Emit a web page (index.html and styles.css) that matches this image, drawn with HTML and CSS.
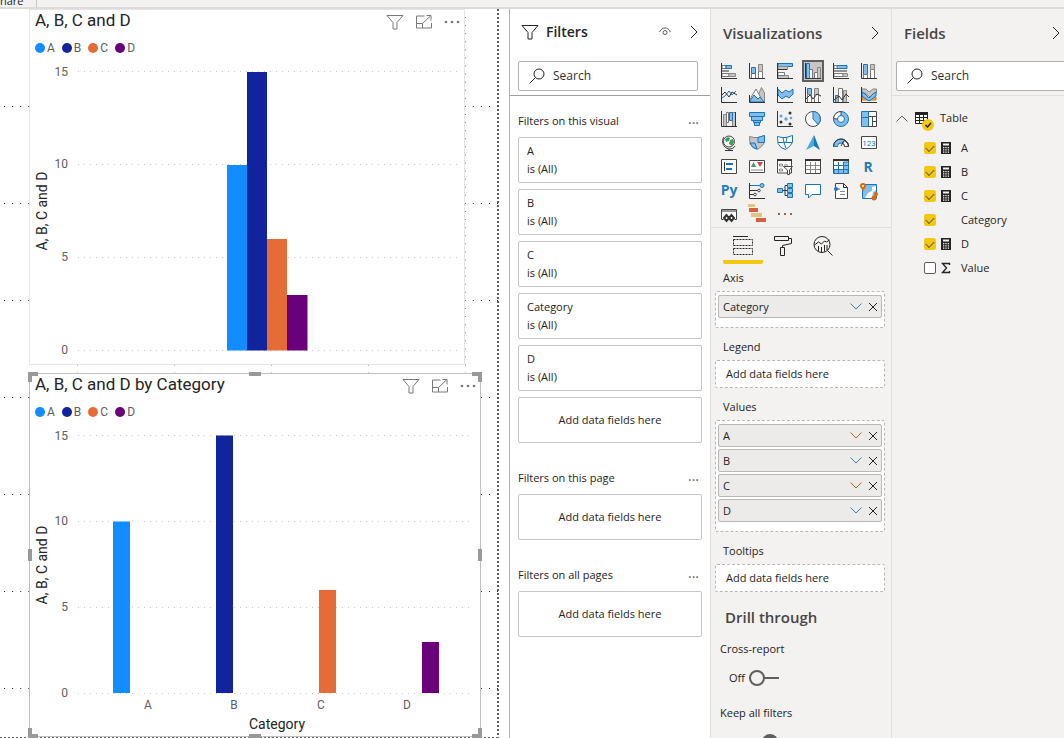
FILE: index.html
```html
<!DOCTYPE html>
<html lang="en">

<head>
    <meta charset="utf-8">
    <meta name="viewport" content="width=device-width,initial-scale=1.0">
    <title>Report editor</title>
    <link rel="stylesheet" href="styles.css">
</head>

<body>
    <!-- shared icons -->
    <svg class="defs" width="0" height="0">
        <symbol id="i-filter" viewBox="0 0 18 16">
            <path d="M1 1.500h16l-6 7V15H7V8.500z" fill="none" stroke="currentColor" />
        </symbol>
        <symbol id="i-focus" viewBox="0 0 16 14">
            <path d="M8.500 1H.5v12h15V8M.5 8.500h6V13M6.500 8.500L14.500 1M10.500.5H15v5" fill="none" stroke="currentColor" />
        </symbol>
        <symbol id="i-search" viewBox="0 0 16 16">
            <circle cx="10" cy="6" r="5" fill="none" stroke="currentColor" />
            <path d="M6.500 9.500L.5 15.500" stroke="currentColor" />
        </symbol>
        <symbol id="i-right" viewBox="0 0 8 14">
            <path d="M1 1l6 6-6 6" fill="none" stroke="currentColor" />
        </symbol>
        <symbol id="i-down" viewBox="0 0 12 7">
            <path d="M.5.5L6 6 11.500.5" fill="none" stroke="currentColor" />
        </symbol>
        <symbol id="i-x" viewBox="0 0 10 10">
            <path d="M1 1l8 8M9 1L1 9" stroke="currentColor" />
        </symbol>
        <symbol id="i-calc" viewBox="0 0 10 12">
            <path d="M0 0h10v12H0z" fill="#252423" />
            <path d="M2 1.500h6v2H2zM2 5h1.300v1.300H2zM4.300 5h1.300v1.300H4.300zM6.700 5H8v1.300H6.700zM2 7.200h1.300v1.300H2zM4.300 7.200h1.300v1.300H4.300zM6.700 7.200H8v1.300H6.700zM2 9.400h1.300v1.300H2zM4.300 9.400h1.300v1.300H4.300zM6.700 9.400H8v1.300H6.700z" fill="#f3f2f1" />
        </symbol>
    </svg>

    <header class="ribbon"><span class="ribbon-item">hare</span></header>

    <div class="workspace">
        <main class="canvas">
            <svg class="snap-grid" width="100%" height="100%">
                <g class="snap-h">
                    <line x1="4" x2="100%" y1="97.500" y2="97.500" />
                    <line x1="4" x2="100%" y1="194.500" y2="194.500" />
                    <line x1="4" x2="100%" y1="291.500" y2="291.500" />
                    <line x1="4" x2="100%" y1="388.500" y2="388.500" />
                    <line x1="4" x2="100%" y1="485.500" y2="485.500" />
                    <line x1="4" x2="100%" y1="582.500" y2="582.500" />
                    <line x1="4" x2="100%" y1="679.500" y2="679.500" />
                </g>
                <g class="snap-v">
                    <line x1="77.500" x2="77.500" y1="8" y2="100%" />
                    <line x1="174.500" x2="174.500" y1="8" y2="100%" />
                    <line x1="271.500" x2="271.500" y1="8" y2="100%" />
                    <line x1="368.500" x2="368.500" y1="8" y2="100%" />
                    <line x1="465.500" x2="465.500" y1="8" y2="100%" />
                </g>
            </svg>

            <section class="visual visual-total">
                <div class="visual-head">
                    <h2>A, B, C and D</h2>
                    <div class="visual-tools">
                        <button aria-label="Filters"><svg width="18" height="16"><use href="#i-filter" /></svg></button>
                        <button aria-label="Focus mode"><svg width="16" height="14"><use href="#i-focus" /></svg></button>
                        <button aria-label="More options"><svg width="16" height="4" fill="currentColor"><circle cx="2" cy="2" r="1.300" /><circle cx="8" cy="2" r="1.300" /><circle cx="14" cy="2" r="1.300" /></svg></button>
                    </div>
                </div>
                <ul class="legend">
                    <li class="a">A</li>
                    <li class="b">B</li>
                    <li class="c">C</li>
                    <li class="d">D</li>
                </ul>
                <svg class="plot" viewBox="0 0 434 305">
                    <g class="grid">
                        <path d="M48 12.500h379M48 105.500h379M48 198.500h379M48 291.500h379" />
                    </g>
                    <g class="ticks">
                        <text x="38" y="17">15</text>
                        <text x="38" y="109">10</text>
                        <text x="38" y="202">5</text>
                        <text x="38" y="295">0</text>
                    </g>
                    <text class="axis-title" transform="translate(17 152) rotate(-90)">A, B, C and D</text>
                    <rect class="a" x="197" y="106" width="20" height="185.500" />
                    <rect class="b" x="217" y="13" width="20" height="278.500" />
                    <rect class="c" x="237" y="180" width="20" height="111.500" />
                    <rect class="d" x="257" y="236" width="20.500" height="55.500" />
                </svg>
            </section>

            <section class="visual visual-category selected">
                <div class="visual-head">
                    <h2>A, B, C and D by Category</h2>
                    <div class="visual-tools">
                        <button aria-label="Filters"><svg width="18" height="16"><use href="#i-filter" /></svg></button>
                        <button aria-label="Focus mode"><svg width="16" height="14"><use href="#i-focus" /></svg></button>
                        <button aria-label="More options"><svg width="16" height="4" fill="currentColor"><circle cx="2" cy="2" r="1.300" /><circle cx="8" cy="2" r="1.300" /><circle cx="14" cy="2" r="1.300" /></svg></button>
                    </div>
                </div>
                <ul class="legend">
                    <li class="a">A</li>
                    <li class="b">B</li>
                    <li class="c">C</li>
                    <li class="d">D</li>
                </ul>
                <svg class="plot" viewBox="0 0 450 313">
                    <g class="grid">
                        <path d="M48 12.500h396M48 98.500h396M48 184.500h396M48 270.500h396" />
                    </g>
                    <g class="ticks">
                        <text x="38" y="17">15</text>
                        <text x="38" y="102">10</text>
                        <text x="38" y="188">5</text>
                        <text x="38" y="274">0</text>
                    </g>
                    <text class="axis-title" transform="translate(17 142) rotate(-90)">A, B, C and D</text>
                    <rect class="a" x="83" y="98.500" width="17" height="171.500" />
                    <rect class="b" x="186" y="12.500" width="17" height="257.500" />
                    <rect class="c" x="289" y="167" width="17" height="103" />
                    <rect class="d" x="392" y="219" width="17" height="51" />
                    <g class="categories">
                        <text x="118" y="286">A</text>
                        <text x="204" y="286">B</text>
                        <text x="291" y="286">C</text>
                        <text x="377" y="286">D</text>
                    </g>
                    <text class="axis-title" x="247" y="306">Category</text>
                </svg>
                <i class="handle tl"></i><i class="handle tc"></i><i class="handle tr"></i>
                <i class="handle ml"></i><i class="handle mr"></i>
                <i class="handle bl"></i><i class="handle bc"></i><i class="handle br"></i>
            </section>
        </main>

        <aside class="pane filters">
            <div class="pane-head">
                <svg width="18" height="16"><use href="#i-filter" /></svg>
                <h1>Filters</h1>
                <button class="eye" aria-label="Show filter pane">
                    <svg width="12" height="9" fill="none" stroke="currentColor"><path d="M.5 5C2 2 4 1 6 1s4 1 5.500 4" /><circle cx="6" cy="5.500" r="2" /></svg>
                </button>
                <button aria-label="Collapse filters"><svg width="8" height="14"><use href="#i-right" /></svg></button>
            </div>
            <label class="search">
                <svg width="16" height="16"><use href="#i-search" /></svg>
                <input type="text" placeholder="Search" aria-label="Search filters">
            </label>
            <div class="filter-groups">
                <section>
                    <div class="group-head"><h3>Filters on this visual</h3><button aria-label="More">...</button></div>
                    <div class="card"><span>A</span><span>is (All)</span></div>
                    <div class="card"><span>B</span><span>is (All)</span></div>
                    <div class="card"><span>C</span><span>is (All)</span></div>
                    <div class="card"><span>Category</span><span>is (All)</span></div>
                    <div class="card"><span>D</span><span>is (All)</span></div>
                    <div class="card drop">Add data fields here</div>
                </section>
                <section>
                    <div class="group-head"><h3>Filters on this page</h3><button aria-label="More">...</button></div>
                    <div class="card drop">Add data fields here</div>
                </section>
                <section>
                    <div class="group-head"><h3>Filters on all pages</h3><button aria-label="More">...</button></div>
                    <div class="card drop">Add data fields here</div>
                </section>
            </div>
        </aside>

        <aside class="pane visualizations">
            <div class="pane-head">
                <h1>Visualizations</h1>
                <button aria-label="Collapse visualizations"><svg width="8" height="14"><use href="#i-right" /></svg></button>
            </div>
            <div class="gallery">
                <button aria-label="Stacked bar chart"><svg viewBox="0 0 16 16"><path class="w" d="M1 2.500h4v3H1zM1 10.500h7v3H1z" /><path class="l" d="M5 2.500h5.500v3H5z" /><path class="g" d="M8 10.500h6.500v3H8z" /><path class="k" d="M.5 0v15.500H16M1 8h7" /></svg></button>
                <button aria-label="Stacked column chart"><svg viewBox="0 0 16 16"><path class="w" d="M2.500 10.500h4v5h-4zM9.500 8.500h4v7h-4z" /><path class="l" d="M2.500 4.500h4v6h-4z" /><path class="g" d="M9.500 1.500h4v7h-4z" /><path class="k" d="M.5 0v15.500H16" /></svg></button>
                <button aria-label="Clustered bar chart"><svg viewBox="0 0 16 16"><path class="l" d="M1 .5h14.500v3H1z" /><path class="g" d="M1 3.500h9.500v3H1zM1 12.500h10.500v3H1z" /><path class="w" d="M1 9.500h6.500v3H1z" /><path class="k" d="M.5 0v15.500H16M1 6.500h9" /></svg></button>
                <button class="active" aria-label="Clustered column chart"><svg viewBox="0 0 16 16"><path class="l" d="M1.500.5h3v15h-3z" /><path class="w" d="M4.500 6.500h3v9h-3zM9.500 9.500h3v6h-3z" /><path class="g" d="M12.500 4.500h3v11h-3z" /><path class="k" d="M.5 0v15.500H16" /></svg></button>
                <button aria-label="100% stacked bar chart"><svg viewBox="0 0 16 16"><path class="l" d="M3 2.500h11v3H3z" /><path class="w" d="M1 2.500h3v3H1zM1 10.500h9v3H1z" /><path class="g" d="M10 10.500h4.500v3H10z" /><path class="k" d="M.5 0v15.500H16M1 8h13" /></svg></button>
                <button aria-label="100% stacked column chart"><svg viewBox="0 0 16 16"><path class="l" d="M2.500 1.500h4v10h-4z" /><path class="w" d="M2.500 11.500h4v4h-4zM9.500 6.500h4v9h-4z" /><path class="g" d="M9.500 1.500h4v5h-4z" /><path class="k" d="M.5 0v15.500H16" /></svg></button>

                <button aria-label="Line chart"><svg viewBox="0 0 16 16"><path class="bl" d="M1 11l3-2 4-5 3 4 4-4" /><path class="k" d="M1 8l3-3 4 5 3-5 5 3M.5 0v15.500H16" /></svg></button>
                <button aria-label="Area chart"><svg viewBox="0 0 16 16"><path class="g" d="M6 15L12.500.5 15.500 6v9z" /><path class="w" d="M1 12L7 2l5 9-2 4H1z" /><path class="l" d="M1 14l4-6 4 4 2-2 4 5H1z" /><path class="k" d="M.5 8v7.500H16" /></svg></button>
                <button aria-label="Stacked area chart"><svg viewBox="0 0 16 16"><path class="l" d="M1 2l4 4 4-3 3 2 4-3v5l-4 4-3-2-4 3-4-4z" /><path class="k" d="M.5 0v15.500H16" /></svg></button>
                <button aria-label="Line and stacked column chart"><svg viewBox="0 0 16 16"><path class="l" d="M2.500 1.500h4v6h-4z" /><path class="w" d="M2.500 7.500h4v8h-4zM9.500 7.500h4v8h-4z" /><path class="g" d="M9.500 1.500h4v6h-4z" /><path class="k" d="M.5 0v15.500H16M1 12l4-4 3 4 4-5 4 2" /></svg></button>
                <button aria-label="Line and clustered column chart"><svg viewBox="0 0 16 16"><path class="l" d="M2.500 8.500h3v7h-3z" /><path class="w" d="M5.500 1.500h4v14h-4z" /><path class="g" d="M10.500 3.500h3v12h-3z" /><path class="k" d="M.5 0v15.500H16M1 13l5-4 3 4 4-6 3 3" /></svg></button>
                <button aria-label="Ribbon chart"><svg viewBox="0 0 16 16"><path d="M1 10h3l4 3 4-3h3v3H1z" fill="#f2a34a" stroke="#d8790f" /><path class="g" d="M1 2h4l3 3 4-3h3.500v4H13l-4 4-5-4H1z" /><path class="l" d="M1 5l3 2 4 4 4-4 3-2v4l-4 3-3 2-3-2-4-3z" /><path class="k" d="M.5 0v15.500H16" /></svg></button>

                <button aria-label="Waterfall chart"><svg viewBox="0 0 16 16"><path class="g" d="M2.500 3.500h3v12h-3zM11.500 1.500h3v14h-3z" /><path class="w" d="M5.500 1.500h2v10h-2z" /><path class="l" d="M8.500 1.500h3v8h-3z" /><path class="k" d="M.5 0v15.500H16M14.500 1v14" /></svg></button>
                <button aria-label="Funnel"><svg viewBox="0 0 16 16"><path class="l" d="M.5 1.500h15v4H.5zM2.500 5.500h11v4h-11zM4.500 9.500h7v2h-7zM5.500 11.500h5v3h-5z" /></svg></button>
                <button aria-label="Scatter chart"><svg viewBox="0 0 16 16"><g fill="#333"><circle cx="13" cy="2" r="1.500" /><circle cx="4" cy="11" r="1.500" /><circle cx="13" cy="13" r="1.500" /></g><g fill="#5ba3d9"><circle cx="4" cy="5" r="1.500" /><circle cx="9" cy="8" r="1.700" /><circle cx="14" cy="7" r="1.300" /></g><path class="k" d="M.5 0v15.500H16" /></svg></button>
                <button aria-label="Pie chart"><svg viewBox="0 0 16 16"><circle class="wk" cx="8" cy="8" r="7.500" /><path class="l" d="M8 8V.5a7.500 7.500 0 0 1 5 13z" /></svg></button>
                <button aria-label="Donut chart"><svg viewBox="0 0 16 16"><circle class="l" cx="8" cy="8" r="7.500" /><path class="wk" d="M8 .5a7.500 7.500 0 0 0-7.500 7L4 8l4-4z" /><circle cx="8" cy="8" r="3.500" fill="#f3f2f1" stroke="#1b74b8" /></svg></button>
                <button aria-label="Treemap"><svg viewBox="0 0 16 16"><path class="wk" d="M7.500.5h8v15h-8zM7.500 5.500h8M11.500 5.500v10M11.500 10.500h4" /><path class="l" d="M.5.5h7v6h-7zM.5 6.500h7v9h-7z" /></svg></button>

                <button aria-label="Map"><svg viewBox="0 0 16 16"><circle class="wk" cx="8" cy="6.500" r="5.500" /><path d="M4 4l3-2 2 1-1 3-3 1zM9 5l3-1 1 3-2 4-3-2z" fill="#3c9d5c" /><path class="k" d="M3 2C0 6 2 13 8 14c3 0 5-1 6-3M8 14v1.500M4 15.500h8" /></svg></button>
                <button aria-label="Filled map"><svg viewBox="0 0 16 16"><path class="g" d="M.5 1.500L5 2.500h4l6.500-2v7l-3 4-4 3L4 12.500l-3-4z" /><path class="l" d="M9 2.500l6.500-2v7H9zM1 8h5l2 6-4-1.500z" /></svg></button>
                <button aria-label="Shape map"><svg viewBox="0 0 16 16"><path class="wb" d="M.5 1.500L5 2.500h4l6.500-2v7l-3 4-4 3L4 12.500l-3-4zM1 7.500h14M6 2.500l1 5 2 6M10 2.500l-1 5" /></svg></button>
                <button aria-label="Azure map"><svg viewBox="0 0 16 16"><path d="M9 0l6 15-6-4z" fill="#1777b7" /><path d="M9 0L1 15l8-4z" fill="#47addd" /></svg></button>
                <button aria-label="Gauge"><svg viewBox="0 0 16 16"><path class="l" d="M.5 11.500a7.500 7.500 0 0 1 15 0h-4a3.500 3.500 0 0 0-7 0z" /><path class="wk" d="M11 5.500c3 1.500 4.500 3.500 4.500 6h-4c0-2-.5-2.500-2-3.500z" /><path class="k" d="M.5 11.500a7.500 7.500 0 0 1 15 0M8 11l3-5" /></svg></button>
                <button aria-label="Card"><svg viewBox="0 0 16 16"><path class="wk" d="M.5 1.500h15v12H.5z" /><text class="num" x="8" y="11">123</text></svg></button>

                <button aria-label="Multi-row card"><svg viewBox="0 0 16 16"><path class="wk" d="M.5.500h15v14H.5z" /><path class="k" d="M3.500 3v9" /><path class="bl2" d="M5 5h7M5 10h6" /></svg></button>
                <button aria-label="KPI"><svg viewBox="0 0 16 16"><path class="wk" d="M.5 1.500h15v12H.5z" /><path d="M2 8l2.500-5L7 8z" fill="#3c9d5c" /><path d="M8 3h6l-3 5z" fill="#d64550" /><path class="gl" d="M2 11h12" /></svg></button>
                <button aria-label="Slicer"><svg viewBox="0 0 16 16"><path class="wk" d="M.5 1h14v13H.5z" /><path class="k2" d="M0 1h15" /><path class="gl" d="M2.500 5h3v2h-3zM2.500 10h3v2h-3zM7 6h4" /><path class="wk" d="M6.500 7.500h9L12.500 11v4.500h-2V11z" /></svg></button>
                <button aria-label="Table"><svg viewBox="0 0 16 16"><path class="wk" d="M.5.500h15v14H.5z" /><path class="gl" d="M1 6.500h14M1 10.500h14M5.500 3v11M10.500 3v11" /><path class="k2" d="M0 1h16" /></svg></button>
                <button aria-label="Matrix"><svg viewBox="0 0 16 16"><path class="wk" d="M.5.500h15v14H.5z" /><path class="l" d="M10.500 3h5v11.500h-5zM1 10.500h14v4H1z" /><path class="bl" d="M5.500 3v11M1 6.500h14M10.500 3v11" /><path class="k2" d="M0 1h16" /></svg></button>
                <button aria-label="R script visual"><svg viewBox="0 0 16 16"><text class="script" x="7" y="13">R</text></svg></button>

                <button aria-label="Python visual"><svg viewBox="0 0 16 16"><text class="script" x="8" y="12">Py</text></svg></button>
                <button aria-label="Key influencers"><svg viewBox="0 0 16 16"><path class="k" d="M.5 0v15.500H16M1 7.500h8M1 11.500h4" /><path class="bl" d="M1 2.500h10" /><circle class="l" cx="13" cy="2.500" r="2" /><circle class="wk" cx="10" cy="7.500" r="1.300" /><circle class="wk" cx="6" cy="11.500" r="1.300" /></svg></button>
                <button aria-label="Decomposition tree"><svg viewBox="0 0 16 16"><path class="k" d="M5 7.500h6M8 2.500v10M8 2.500h3M8 12.500h3" /><path class="l" d="M.5 5.500h5v4h-5zM10.500.500h5v4h-5zM10.500 5.500h5v4h-5zM10.500 10.500h5v4h-5z" /></svg></button>
                <button aria-label="Q&amp;A"><svg viewBox="0 0 16 16"><path class="wb" d="M.5 1.500h15v10H7l-3.500 3.500v-3.500h-3z" /></svg></button>
                <button aria-label="Paginated report"><svg viewBox="0 0 16 16"><path class="wk" d="M2.500.500h8l4 4v11h-12z" /><path class="k" d="M10.500.500v4h4" /><path class="gl" d="M7 8.500h5M7 11.500h5" /><circle cx="3" cy="6" r="2" fill="#1b74b8" /><path class="bl" d="M3 6h4" /></svg></button>
                <button aria-label="ArcGIS map"><svg viewBox="0 0 16 16"><path class="l" d="M1.500 1.500h14v14h-14z" /><path d="M4 15l3-5 4-2V4l4-1v4l-3 2-1 6z" fill="#fff" /><path d="M-1 3a3 3 0 0 1 6 0c0 2-2 3-3 5-1-2-3-3-3-5z" fill="#d96b0b" /><circle cx="2" cy="3" r="1" fill="#fff" /><circle cx="15" cy="11" r="2" fill="#d96b0b" /><circle cx="13" cy="15" r="2.500" fill="#d96b0b" /></svg></button>

                <button aria-label="Power Apps"><svg viewBox="0 0 16 16"><path class="wk" d="M2.500 12.500h-2v-10h15v10h-2" /><path class="k" d="M1 4h14" /><path class="k" d="M3 11l2.500-3L8 11l-2.500 3zM8 11l2.500-3 2.500 3-2.500 3z" stroke-width="2" /></svg></button>
                <button aria-label="Gantt"><svg viewBox="0 0 16 16"><path d="M-1-3h7v3h-7zM2 6h11v4H2z" fill="#e8c27c" /><path d="M0 1h9v4H0zM7 11h10v4H7z" fill="#d65f42" /></svg></button>
                <button aria-label="Get more visuals"><svg viewBox="0 0 16 16"><path d="M1 6h2v2H1zM7 6h2v2H7zM13 6h2v2h-2z" fill="#8a6a50" /></svg></button>
            </div>
            <div class="tabs">
                <button class="current" aria-label="Fields"><svg width="22" height="20" fill="none" stroke="#252423"><path d="M1 .5h15" /><path d="M1.500 3.500h19v6h-19zM1.500 12.500h19v6h-19z" stroke-dasharray="2 1" /></svg></button>
                <button aria-label="Format"><svg width="18" height="20" fill="none" stroke="#252423"><path d="M.5.500h14v4H.5zM14.500 2.500h3v5l-9 2v2M6.500 11.500h4v8h-4z" /></svg></button>
                <button aria-label="Analytics"><svg width="20" height="20" fill="none" stroke="#252423"><circle cx="9" cy="8.500" r="8" /><path d="M1.500 9l4-3 3 2 3-3 2 1 3-2M5.500 15v-5M8.500 16.500V11M11.500 15.500V9M14 14V9M14.500 14.500l5 5" /></svg></button>
            </div>
            <div class="wells">
                <h3>Axis</h3>
                <div class="well filled">
                    <div class="field"><span>Category</span><button class="blue" aria-label="Options"><svg width="12" height="7"><use href="#i-down" /></svg></button><button aria-label="Remove"><svg width="10" height="10"><use href="#i-x" /></svg></button></div>
                </div>
                <h3>Legend</h3>
                <div class="well">Add data fields here</div>
                <h3>Values</h3>
                <div class="well filled">
                    <div class="field"><span>A</span><button class="brown" aria-label="Options"><svg width="12" height="7"><use href="#i-down" /></svg></button><button aria-label="Remove"><svg width="10" height="10"><use href="#i-x" /></svg></button></div>
                    <div class="field"><span>B</span><button class="blue" aria-label="Options"><svg width="12" height="7"><use href="#i-down" /></svg></button><button aria-label="Remove"><svg width="10" height="10"><use href="#i-x" /></svg></button></div>
                    <div class="field"><span>C</span><button class="brown" aria-label="Options"><svg width="12" height="7"><use href="#i-down" /></svg></button><button aria-label="Remove"><svg width="10" height="10"><use href="#i-x" /></svg></button></div>
                    <div class="field"><span>D</span><button class="blue" aria-label="Options"><svg width="12" height="7"><use href="#i-down" /></svg></button><button aria-label="Remove"><svg width="10" height="10"><use href="#i-x" /></svg></button></div>
                </div>
                <h3>Tooltips</h3>
                <div class="well">Add data fields here</div>
            </div>
            <div class="drill">
                <h2>Drill through</h2>
                <p>Cross-report</p>
                <label class="switch">Off <input type="checkbox" role="switch"></label>
                <p>Keep all filters</p>
                <label class="switch">On <input type="checkbox" role="switch" checked></label>
            </div>
        </aside>

        <aside class="pane fields">
            <div class="pane-head">
                <h1>Fields</h1>
                <button aria-label="Collapse fields"><svg width="8" height="14"><use href="#i-right" /></svg></button>
            </div>
            <label class="search">
                <svg width="16" height="16"><use href="#i-search" /></svg>
                <input type="text" placeholder="Search" aria-label="Search fields">
            </label>
            <div class="tree">
                <button class="table-row">
                    <svg width="12" height="7" fill="none" stroke="#605e5c"><path d="M.5 6.500L6 1l5.500 5.500" /></svg>
                    <svg class="table-icon" width="16" height="12"><path d="M.5.500h12v11H.5zM4.500 3v8M8.500 3v8M1 5.500h12M1 8.500h12" fill="#fff" stroke="#252423" /><path d="M0 0h13v3H0z" fill="#252423" /><circle cx="13" cy="13" r="6" fill="#f2c811" /><path d="M10.500 13l2 2 3.500-4" fill="none" stroke="#252423" stroke-width="1.500" /></svg>
                    <span>Table</span>
                </button>
                <label><input type="checkbox" checked><svg width="10" height="12"><use href="#i-calc" /></svg><span>A</span></label>
                <label><input type="checkbox" checked><svg width="10" height="12"><use href="#i-calc" /></svg><span>B</span></label>
                <label><input type="checkbox" checked><svg width="10" height="12"><use href="#i-calc" /></svg><span>C</span></label>
                <label><input type="checkbox" checked><svg width="10" height="12"></svg><span>Category</span></label>
                <label><input type="checkbox" checked><svg width="10" height="12"><use href="#i-calc" /></svg><span>D</span></label>
                <label><input type="checkbox"><svg width="10" height="12"><path d="M8.500 3V1.500H1.500L5.500 6l-4 4.500h7V9" fill="none" stroke="#252423" stroke-width="1.400" /></svg><span>Value</span></label>
            </div>
        </aside>
    </div>
</body>

</html>
```
FILE: styles.css
```css
* {
    box-sizing: border-box;
}

body {
    margin: 0;
    height: 100vh;
    display: flex;
    flex-direction: column;
    overflow: hidden;
    background: #fff;
    color: #252423;
    font-family: "Open Sans", "Noto Sans", sans-serif;
    font-size: 11px;
    line-height: 18px;
}

h1, h2, h3, p, ul {
    margin: 0;
    padding: 0;
    font-size: 11px;
    font-weight: normal;
}

button {
    display: flex;
    align-items: center;
    justify-content: center;
    padding: 0;
    border: none;
    background: none;
    color: inherit;
    font: inherit;
    cursor: pointer;
}

svg {
    display: block;
    flex: none;
}

.defs {
    position: absolute;
}

/* top strip */
.ribbon {
    flex: none;
    height: 9px;
    display: flex;
    align-items: flex-end;
    overflow: hidden;
    background: #f3f2f1;
    border-bottom: 2px solid #dddbd9;
}

.ribbon-item {
    width: 37px;
    border-right: 1px solid #c8c6c4;
    line-height: 12px;
}

.workspace {
    flex: 1;
    min-height: 0;
    display: flex;
}

/* report canvas */
.canvas {
    flex: 1;
    min-width: 0;
    position: relative;
    display: flex;
    flex-direction: column;
    align-items: flex-start;
    gap: 8px;
    margin-right: 10px;
    padding-left: 29px;
    background:
        repeating-linear-gradient(#605e5c 0 2px, transparent 2px 4px) right / 2px 100% no-repeat,
        repeating-linear-gradient(90deg, #605e5c 0 2px, transparent 2px 4px) bottom / 100% 1px no-repeat;
}

.snap-grid {
    position: absolute;
    left: 0;
    top: 0;
    stroke: #252423;
    stroke-dasharray: 1 7.083;
}

.snap-v {
    stroke: #7a7876;
}

.visual {
    position: relative;
    background: #fff;
    border: 1px solid #e6e6e6;
}

.visual-total {
    width: 436px;
}

.visual-category {
    width: 452px;
}

.selected {
    border-color: #c0c0c0;
}

.visual-head {
    display: flex;
    justify-content: space-between;
    height: 20px;
    padding: 0 4px 0 5px;
}

.visual-head h2 {
    font-family: Roboto, sans-serif;
    font-size: 17px;
    line-height: 20px;
}

.visual-tools {
    display: flex;
    gap: 12px;
    height: 24px;
    color: #7a7876;
}

.legend {
    display: flex;
    gap: 7px;
    margin-top: 8px;
    padding: 0 5px 1px;
    height: 21px;
    align-items: center;
    list-style: none;
    font-family: Roboto, sans-serif;
    font-size: 12px;
    color: #605e5c;
}

.legend li {
    display: flex;
    align-items: center;
    gap: 2px;
}

.legend li::before {
    content: "";
    width: 10px;
    height: 10px;
    border-radius: 50%;
    background: currentColor;
}

.legend .a::before { background: #118dff; }
.legend .b::before { background: #12239e; }
.legend .c::before { background: #e66c37; }
.legend .d::before { background: #6b007b; }

.plot {
    width: 100%;
    height: auto;
    font-family: Roboto, sans-serif;
    font-size: 12px;
    fill: #605e5c;
}

.plot .a { fill: #118dff; }
.plot .b { fill: #12239e; }
.plot .c { fill: #e66c37; }
.plot .d { fill: #6b007b; }

.grid {
    stroke: #c8c6c4;
    stroke-dasharray: 1 5;
}

.ticks {
    text-anchor: end;
}

.categories {
    text-anchor: middle;
}

.axis-title {
    fill: #252423;
    font-size: 14px;
    text-anchor: middle;
}

/* resize handles of the selected visual */
.handle {
    position: absolute;
    width: 12px;
    height: 4px;
    background: #999;
}

.tl, .tr, .bl, .br {
    width: 10px;
    height: 10px;
    background: none;
    border: 0 solid #999;
}

.tl { left: -2px; top: -2px; border-width: 4px 0 0 4px; }
.tr { right: -2px; top: -2px; border-width: 4px 4px 0 0; }
.bl { left: -2px; bottom: -2px; border-width: 0 0 4px 4px; }
.br { right: -2px; bottom: -2px; border-width: 0 4px 4px 0; }
.tc { left: calc(50% - 6px); top: -2px; }
.bc { left: calc(50% - 6px); bottom: -2px; }

.ml, .mr {
    width: 4px;
    height: 12px;
    top: calc(50% - 6px);
}

.ml { left: -2px; }
.mr { right: -2px; }

/* side panes */
.pane {
    flex: none;
    background: #f3f2f1;
    border-left: 1px solid #e1dfdd;
    overflow: hidden;
}

.pane-head {
    display: flex;
    align-items: center;
    height: 48px;
    padding: 0 12px;
}

.pane-head h1 {
    flex: 1;
    font-size: 15px;
    font-weight: 600;
    color: #484644;
}

.search {
    display: flex;
    align-items: center;
    gap: 8px;
    height: 30px;
    padding-left: 10px;
    background: #fff;
    border: 1px solid #b3b0ad;
    border-radius: 2px;
}

.search input {
    width: 100%;
    min-width: 0;
    padding: 0;
    border: none;
    outline: none;
    background: none;
    font: inherit;
    font-size: 12px;
}

.search input::placeholder {
    color: #323130;
}

/* filters */
.filters {
    width: 201px;
    background: #fff;
    border-left-color: #b3b0ad;
}

.filters .pane-head {
    gap: 7px;
    height: 45px;
    padding-left: 11px;
}

.filters .pane-head h1 {
    font-size: 14px;
    color: #252423;
}

.filters .eye {
    margin-right: 12px;
    color: #605e5c;
}

.filters .search {
    margin: 7px 12px 4px 8px;
}

.filter-groups {
    display: flex;
    flex-direction: column;
    gap: 26px;
    padding: 16px 8px;
    border-top: 1px solid #a19f9d;
}

.filter-groups section {
    display: flex;
    flex-direction: column;
    gap: 6px;
}

.group-head {
    display: flex;
    justify-content: space-between;
    height: 19px;
    padding-right: 3px;
}

.group-head button {
    padding-bottom: 6px;
    font-size: 14px;
    color: #605e5c;
}

.card {
    display: flex;
    flex-direction: column;
    justify-content: center;
    height: 46px;
    padding: 0 8px;
    border: 1px solid #c8c6c4;
    border-radius: 2px;
}

.drop {
    align-items: center;
}

/* visualizations */
.visualizations {
    width: 181px;
}

.gallery {
    display: grid;
    grid-template-columns: repeat(6, 28px);
    grid-auto-rows: 24px;
    padding: 2px 4px 0;
    height: 171px;
    border-bottom: 1px solid #e1dfdd;
}

.gallery button {
    height: 24px;
}

.gallery svg {
    width: 16px;
    height: 16px;
    overflow: visible;
    fill: none;
}

.gallery .active svg {
    width: 22px;
    height: 22px;
    padding: 1px;
    border: 2px solid #605e5c;
    background: #c8c6c4;
}

.k { stroke: #333; }
.k2 { stroke: #333; stroke-width: 2; }
.w { fill: #fff; stroke: #7a7876; }
.wk { fill: #fff; stroke: #484644; }
.wb { fill: #fff; stroke: #1b74b8; }
.g { fill: #c8c6c4; stroke: #8a8886; }
.gl { stroke: #8a8886; }
.l { fill: #83bdeb; stroke: #1b74b8; }
.bl { stroke: #1b74b8; }
.bl2 { stroke: #1b74b8; stroke-width: 2; }

.num {
    fill: #1b74b8;
    font-family: Roboto, sans-serif;
    font-size: 8px;
    text-anchor: middle;
}

.script {
    fill: #2b7cb8;
    font-size: 14px;
    font-weight: bold;
    text-anchor: middle;
}

.tabs {
    display: flex;
    padding-left: 12px;
}

.tabs button {
    width: 40px;
    height: 36px;
    padding-top: 4px;
    border-bottom: 4px solid transparent;
}

.tabs .current {
    border-bottom-color: #f2c811;
    border-radius: 2px;
}

.wells {
    padding: 5px 6px 0 4px;
}

.wells h3 {
    height: 22px;
    padding: 0 8px;
}

.well {
    height: 28px;
    margin-bottom: 10px;
    padding: 4px 10px;
    background: #fff;
    border: 1px dashed #bab8b6;
    border-radius: 2px;
}

.filled {
    display: flex;
    flex-direction: column;
    gap: 2px;
    height: auto;
    padding: 3px 2px 9px;
}

.field {
    display: flex;
    align-items: center;
    gap: 6px;
    height: 23px;
    padding: 0 3px 0 4px;
    background: #edebe9;
    border: 1px solid #bab8b6;
    border-radius: 2px;
}

.field span {
    flex: 1;
}

.field .blue {
    color: #3a7fc1;
}

.field .brown {
    color: #b5652b;
}

.drill {
    padding: 4px 9px 0;
}

.drill h2 {
    padding-left: 5px;
    margin-bottom: 12px;
    font-size: 15px;
    font-weight: 600;
    line-height: 22px;
    color: #484644;
}

.switch {
    display: flex;
    align-items: center;
    gap: 4px;
    height: 22px;
    margin: 9px 0 15px 9px;
}

.switch input {
    appearance: none;
    display: flex;
    align-items: center;
    width: 30px;
    height: 12px;
    margin: 0;
    background: linear-gradient(#605e5c, #605e5c) center / 100% 2px no-repeat;
}

.switch input::before {
    content: "";
    width: 12px;
    height: 12px;
    border: 2px solid #605e5c;
    border-radius: 50%;
    background: #f3f2f1;
}

.switch input:checked::before {
    margin-left: auto;
    background: #605e5c;
}

/* fields */
.fields {
    width: 173px;
}

.fields .pane-head {
    padding-right: 4px;
}

.fields .search {
    margin: 4px -4px 4px 4px;
}

.tree {
    padding: 10px 4px;
    border-top: 1px solid #e1dfdd;
}

.tree span {
    line-height: 24px;
}

.table-row {
    gap: 7px;
    height: 24px;
    margin-bottom: 6px;
}

.table-row span {
    margin-left: 2px;
    font-weight: 500;
}

.table-icon {
    overflow: visible;
}

.tree label {
    display: flex;
    align-items: center;
    gap: 5px;
    height: 24px;
    padding-left: 28px;
}

.tree label span {
    margin-left: 5px;
}

.tree input {
    appearance: none;
    display: flex;
    justify-content: center;
    width: 12px;
    height: 12px;
    margin: 0;
    border: 1px solid #605e5c;
    border-radius: 2px;
    background: #fff;
}

.tree input:checked {
    border-color: #f2c811;
    background: #f2c811;
}

.tree input:checked::before {
    content: "";
    width: 7px;
    height: 4px;
    margin-top: 2px;
    border: solid #605e5c;
    border-width: 0 0 1px 1px;
    transform: rotate(-45deg);
}
```
